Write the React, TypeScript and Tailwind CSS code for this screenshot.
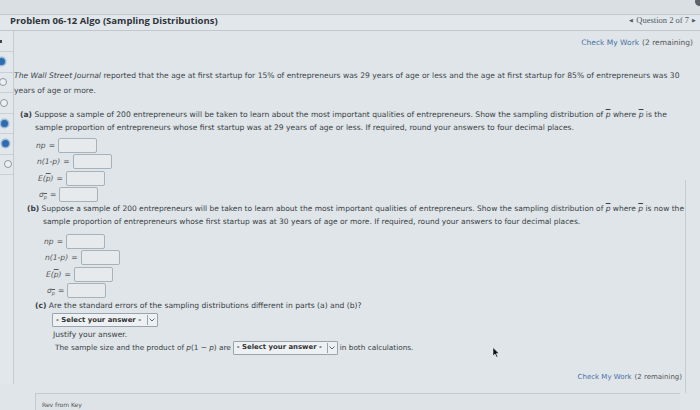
import React from "react";

const body = { fontFamily: '"DejaVu Sans", Verdana, sans-serif' };

function PBar() {
  return <span className="italic overline">p</span>;
}

function Box() {
  return <span className="inline-block w-[39px] h-[15px] rounded-[2px] border border-[#a7b1b9] bg-[#e6eaed] align-middle" />;
}

function Row({ label, ml }: { label: React.ReactNode; ml: string }) {
  return (
    <div className={`flex items-center h-[16.5px] ${ml}`}>
      <span className="italic text-[#555]">{label}</span>
      <span className="text-[#666] mx-[3px]">=</span>
      <Box />
    </div>
  );
}

function Select({ w }: { w: string }) {
  return (
    <span className={`inline-flex items-center justify-between ${w} h-[14px] border border-[#9aa4ad] bg-[#eef1f3] rounded-[1px] pl-[3px] pr-[1px] align-middle`}>
      <span className="font-bold text-[#333] text-[6.9px]">- Select your answer -</span>
      <span className="flex items-center justify-center w-[9px] h-[10px] border-l border-[#9aa4ad]">
        <svg width="6" height="4" viewBox="0 0 6 4"><path d="M0.5 0.5 L3 3 L5.5 0.5" fill="none" stroke="#4a5a80" strokeWidth="0.9" /></svg>
      </span>
    </span>
  );
}

function Dot({ kind, ml }: { kind: "blue" | "hollow"; ml: string }) {
  return (
    <div className="h-[20.5px] border-b border-[#c9d0d6] flex items-center">
      {kind === "blue" && <span className={`block w-[7px] h-[7px] rounded-full bg-[#2d6cb0] ring-[1.5px] ring-[#9db9d8] ${ml}`} />}
      {kind === "hollow" && <span className={`block w-[8px] h-[8px] rounded-full border border-[#8f989f] bg-[#eef1f3] ${ml}`} />}
    </div>
  );
}

export default function App() {
  return (
    <div className="relative w-[700px] h-[410px] overflow-hidden bg-[#dfe5e9] text-[#3a3f44]" style={body}>
      {/* top band */}
      <div className="h-[15px] bg-[#d9dfe3] border-b border-[#c3cbd1] relative">
        <span className="absolute right-[-4px] top-[-3px] w-[9px] h-[9px] rounded-full bg-[#5b6166]" />
      </div>
      {/* header */}
      <div className="h-[16px] flex items-start justify-between border-b border-[#c0c8ce] bg-[#e2e7eb]">
        <div className="pl-[10px] -mt-[1px] text-[9.5px] font-bold text-[#2f3439]" style={{ fontFamily: '"Open Sans", sans-serif' }}>
          Problem 06-12 Algo (Sampling Distributions)
        </div>
        <div className="pr-[4px] -mt-[1px] flex items-center gap-[3px] text-[8.5px] text-[#4f5a66]" style={{ fontFamily: '"Liberation Serif", serif' }}>
          <span className="text-[5px]">◀</span>
          <span>Question 2 of 7</span>
          <span className="text-[5px]">▶</span>
        </div>
      </div>

      <div className="flex">
        {/* left strip */}
        <div className="w-[14px] shrink-0 border-r border-[#c3cbd1] bg-[#e2e7eb]">
          <div className="h-[21px] border-b border-[#c9d0d6] flex items-center">
            <span className="block w-[2px] h-[3px] bg-[#444]" />
          </div>
          <Dot kind="blue" ml="-ml-[2px]" />
          <Dot kind="hollow" ml="-ml-[1px]" />
          <Dot kind="hollow" ml="ml-[0px]" />
          <Dot kind="blue" ml="ml-[1px]" />
          <Dot kind="blue" ml="ml-[2px]" />
          <Dot kind="hollow" ml="ml-[4px]" />
        </div>

        {/* main */}
        <div className="flex-1 text-[7.6px] leading-[13px] relative whitespace-nowrap">
          <div className="flex justify-end pr-[7px] pt-[5px] h-[37px] text-[7.5px]">
            <span className="text-[#4a72a8]">Check My Work</span>
            <span className="ml-[3px] text-[#555]">(2 remaining)</span>
          </div>

          <div className="leading-[15px] text-[#41464b]">
            <div><span className="italic">The Wall Street Journal</span> reported that the age at first startup for 15% of entrepreneurs was 29 years of age or less and the age at first startup for 85% of entrepreneurs was 30</div>
            <div>years of age or more.</div>
          </div>

          <div className="mt-[10px] ml-[6px]">
            <div>
              <span className="font-bold">(a)</span> Suppose a sample of 200 entrepreneurs will be taken to learn about the most important qualities of entrepreneurs. Show the sampling distribution of <PBar /> where <PBar /> is the
            </div>
            <div className="pl-[15px]">sample proportion of entrepreneurs whose first startup was at 29 years of age or less. If required, round your answers to four decimal places.</div>
          </div>

          <div className="mt-[3px]">
            <Row ml="ml-[22px]" label="np" />
            <Row ml="ml-[23px]" label="n(1-p)" />
            <Row ml="ml-[24px]" label={<>E(<PBar />)</>} />
            <Row ml="ml-[25px]" label={<>σ<sub className="text-[5px]"><PBar /></sub></>} />
          </div>

          <div className="ml-[13px] leading-[12.5px] text-[7.5px]">
            <div>
              <span className="font-bold">(b)</span> Suppose a sample of 200 entrepreneurs will be taken to learn about the most important qualities of entrepreneurs. Show the sampling distribution of <PBar /> where <PBar /> is now the
            </div>
            <div className="pl-[16px]">sample proportion of entrepreneurs whose first startup was at 30 years of age or more. If required, round your answers to four decimal places.</div>
          </div>

          <div className="mt-[5px]">
            <Row ml="ml-[30px]" label="np" />
            <Row ml="ml-[31px]" label="n(1-p)" />
            <Row ml="ml-[32px]" label={<>E(<PBar />)</>} />
            <Row ml="ml-[33px]" label={<>σ<sub className="text-[5px]"><PBar /></sub></>} />
          </div>

          <div className="ml-[21px]">
            <span className="font-bold">(c)</span> Are the standard errors of the sampling distributions different in parts (a) and (b)?
          </div>
          <div className="ml-[38px] mt-[1px] flex">
            <Select w="w-[106px]" />
          </div>
          <div className="ml-[39px] mt-[2px] leading-[12px]">Justify your answer.</div>
          <div className="ml-[41px] flex items-center h-[13px] text-[7.3px]">
            <span>The sample size and the product of <span className="italic">p</span>(1 − <span className="italic">p</span>) are</span>
            <span className="ml-[2px] flex"><Select w="w-[105px]" /></span>
            <span className="ml-[2px]">in both calculations.</span>
          </div>

          <div className="flex justify-end pr-[18px] mt-[17px] text-[7px]">
            <span className="text-[#4a72a8]">Check My Work</span>
            <span className="ml-[3px] text-[#555]">(2 remaining)</span>
          </div>

          <svg className="absolute left-[478px] top-[316px]" width="8" height="11" viewBox="0 0 8 11">
            <path d="M1 0.5 L1 9 L3 7 L4.6 10.3 L5.8 9.7 L4.3 6.6 L7 6.6 Z" fill="#111" stroke="#fff" strokeWidth="0.5" />
          </svg>
        </div>
      </div>

      {/* right panel border */}
      <div className="absolute left-[685px] top-[180px] w-px h-[213px] bg-[#c5ccd2]" />
      {/* footer */}
      <div className="absolute left-[35px] right-[20px] top-[393px] h-[20px] border-t border-l border-[#c3cbd1] bg-[#dde3e7]">
        <div className="pl-[6px] pt-[6px] text-[6px] text-[#555]">Rev from Key</div>
      </div>
    </div>
  );
}
